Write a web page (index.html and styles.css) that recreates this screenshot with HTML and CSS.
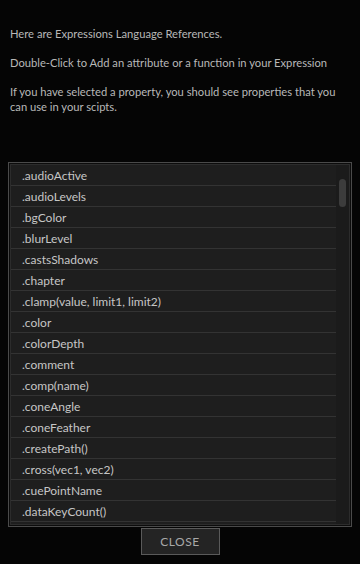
FILE: index.html
```html
<!DOCTYPE html>
<html>

<head>
    <title>Expressions Reference</title>
    <link rel="stylesheet" href="styles.css">
</head>

<body>
    <div class="intro">
        <p>Here are Expressions Language References.</p>
        <p>Double-Click to Add an attribute or a function in your Expression</p>
        <p>If you have selected a property, you should see properties that you can use in your scipts.</p>
    </div>
    <div class="panel">
        <div class="panel-inner">
            <ul class="list">
                <li>.audioActive</li>
                <li>.audioLevels</li>
                <li>.bgColor</li>
                <li>.blurLevel</li>
                <li>.castsShadows</li>
                <li>.chapter</li>
                <li>.clamp(value, limit1, limit2)</li>
                <li>.color</li>
                <li>.colorDepth</li>
                <li>.comment</li>
                <li>.comp(name)</li>
                <li>.coneAngle</li>
                <li>.coneFeather</li>
                <li>.createPath()</li>
                <li>.cross(vec1, vec2)</li>
                <li>.cuePointName</li>
                <li>.dataKeyCount()</li>
            </ul>
            <div class="scroll">
                <div class="thumb"></div>
            </div>
        </div>
    </div>
    <button class="close">CLOSE</button>
</body>

</html>
```

FILE: styles.css
```css
html {
    --textColor: #b8b8b8;
    --itemColor: #c6c6c6;
    --listBg: #1e1e1e;
    --lineColor: #333333;
}

body {
    margin: 0;
    background: #050505;
    font-family: Lato, "Noto Sans", sans-serif;
    font-size: 11.2px;
    color: var(--textColor);
}

.intro {
    padding: 26px 14px 0 10px;
}

.intro p {
    margin: 0 0 14px;
    line-height: 15px;
}

.panel {
    margin: 48px 8px 0;
    height: 365px;
    box-sizing: border-box;
    border: 1px solid #4a4a4a;
    padding: 1px;
    background: #0c0c0c;
}

.panel-inner {
    display: flex;
    height: 100%;
    box-sizing: border-box;
    border: 1px solid #2c2c2c;
    background: var(--listBg);
}

.list {
    flex: 1;
    margin: 0;
    padding: 0;
    list-style: none;
    overflow: hidden;
}

.list li {
    height: 20px;
    line-height: 21px;
    padding-left: 11px;
    border-bottom: 1px solid var(--lineColor);
    color: var(--itemColor);
    font-size: 12px;
    white-space: nowrap;
}

.scroll {
    width: 13px;
    background: #1b1b1b;
}

.thumb {
    width: 7px;
    height: 28px;
    margin: 14px 0 0 3px;
    border-radius: 4px;
    background: #3c3c3c;
}

.close {
    display: block;
    width: 79px;
    height: 27px;
    margin: 1px auto 0;
    border: 1px solid #5a5a5a;
    background: #242424;
    color: #a8a8a8;
    font-family: Lato, "Noto Sans", sans-serif;
    font-size: 12px;
    letter-spacing: 0.5px;
}
```
